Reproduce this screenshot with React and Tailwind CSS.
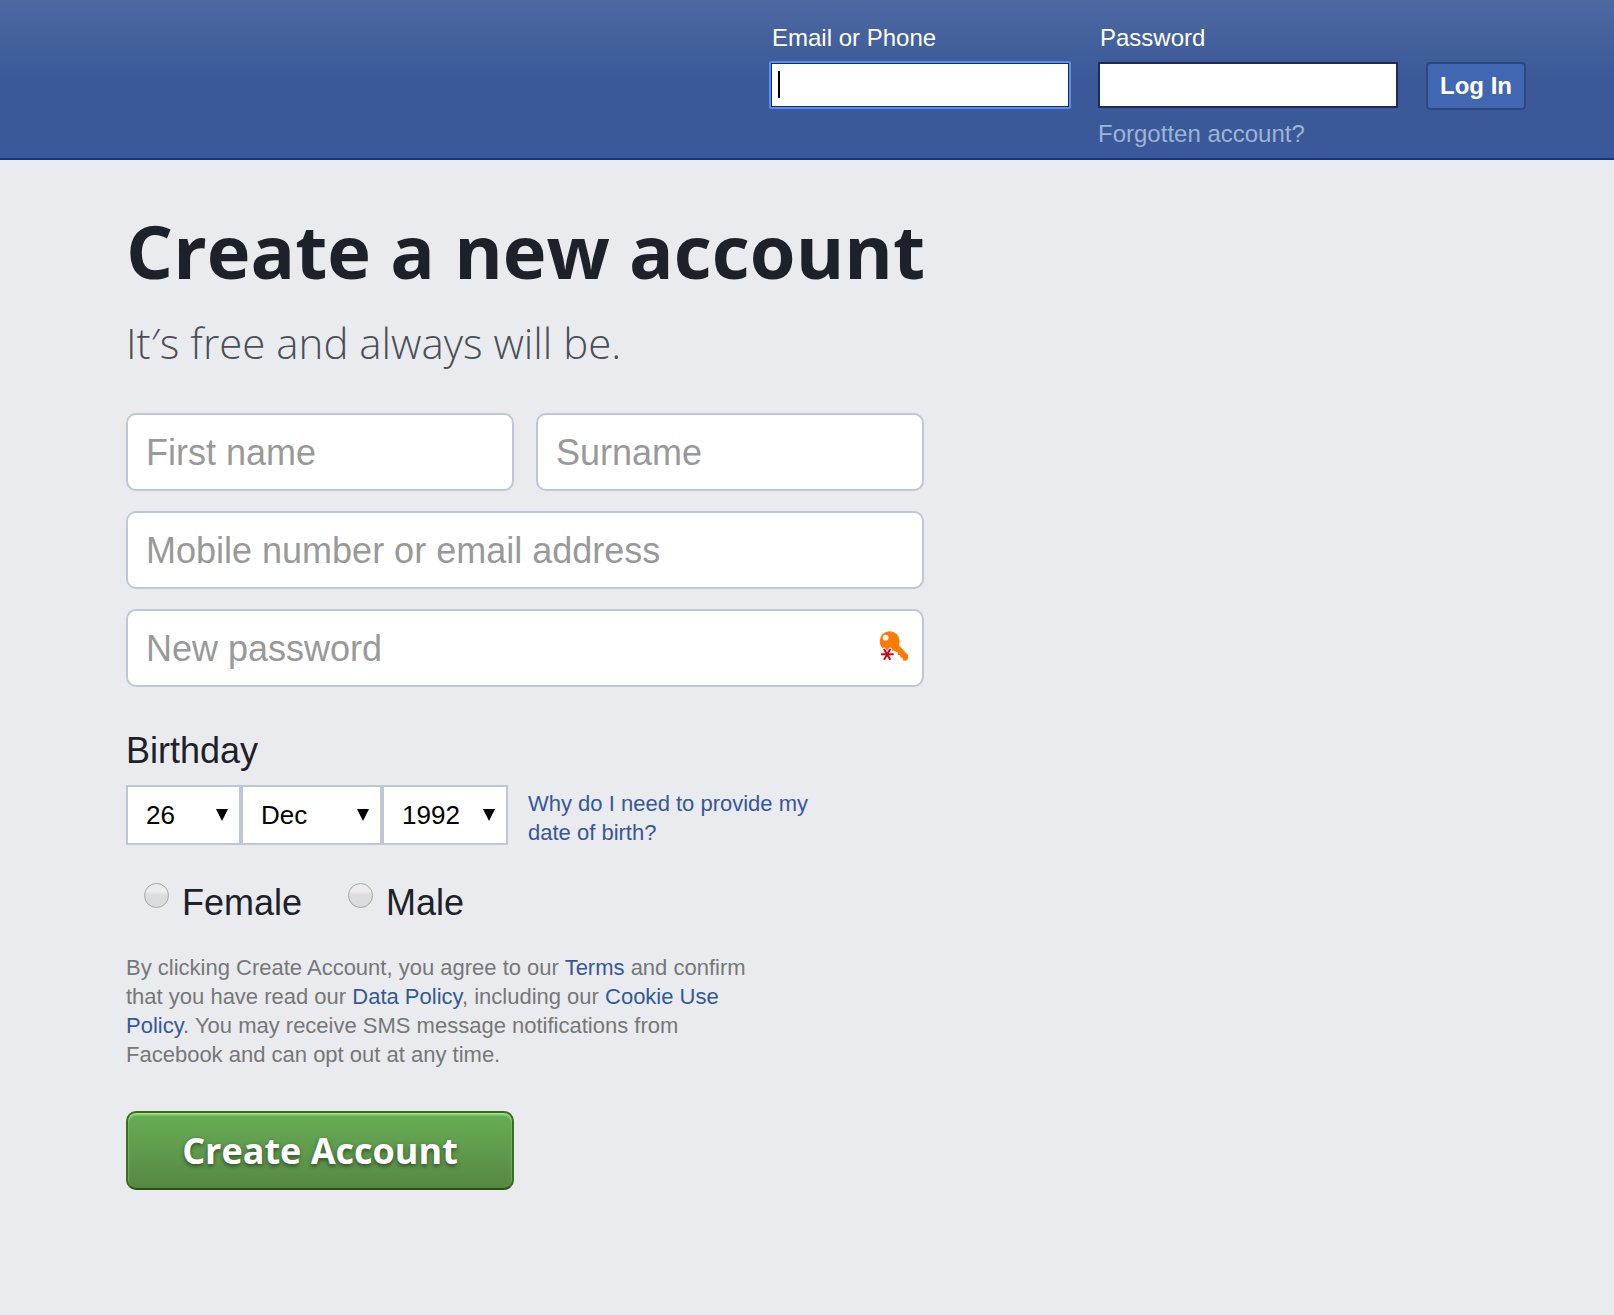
const days = Array.from({ length: 31 }, (_, i) => String(i + 1));
const months = ['Jan', 'Feb', 'Mar', 'Apr', 'May', 'Jun', 'Jul', 'Aug', 'Sep', 'Oct', 'Nov', 'Dec'];
const years = Array.from({ length: 100 }, (_, i) => String(2018 - i));

function KeyIcon({ className }) {
  return (
    <svg viewBox="0 0 90 90" className={className} aria-hidden="true">
      <circle cx="32" cy="31" r="30" fill="#ff7a00" />
      <path fill="#ff7a00" d="M58 40l6 8 23 24v12l-5 5H73l-2-8-7-2v-6l-8-2v-7l-10-3-4-10Z" />
      <circle cx="20" cy="20" r="8.5" fill="#fff" />
      <path d="M7 70h36M15 56l19 28M34 56 15 84" stroke="#fff" strokeWidth="12" strokeLinecap="round" />
      <path d="M6 70h38M15 54l19 32M34 54 15 86" stroke="#d0021b" strokeWidth="6" />
    </svg>
  );
}

function SignupInput({ label, type = 'text', className = '' }) {
  return (
    <input
      type={type}
      aria-label={label}
      placeholder={label}
      className={`h-[78px] w-full min-w-0 rounded-[10px] border-2 border-[#bdc7d8] bg-white px-[18px] pt-0.5 text-[36px] text-[#1d2129] placeholder:text-[#999] ${className}`}
    />
  );
}

function DateSelect({ label, options, value, className }) {
  return (
    <div className={`relative ${className}`}>
      <select
        aria-label={label}
        defaultValue={value}
        className="h-[60px] w-full appearance-none border-2 border-[#bdc7d8] bg-white pl-[18px] text-[26px] text-black"
      >
        {options.map((o) => (
          <option key={o}>{o}</option>
        ))}
      </select>
      <svg viewBox="0 0 12 12" className="pointer-events-none absolute top-6 right-[13px] size-3" aria-hidden="true">
        <path d="M0 0h12L6 12Z" fill="#000" />
      </svg>
    </div>
  );
}

function GenderRadio({ label }) {
  return (
    <label className="flex items-start gap-[13px]">
      <input
        type="radio"
        name="gender"
        className="size-[25px] appearance-none rounded-full border border-[#a6a6a6] bg-linear-to-b from-[#ededed] from-30% to-[#dcdcdc] to-50% checked:border-8 checked:border-[#555]"
      />
      <span className="text-[36px] leading-10">{label}</span>
    </label>
  );
}

function TextLink({ children }) {
  return (
    <a href="#" className="text-[#365899] hover:underline">
      {children}
    </a>
  );
}

export default function App() {
  return (
    <div className="min-h-screen bg-[#e9ebee] font-['Liberation_Sans',Arial,sans-serif] text-[#1d2129]">
      <header className="border-b-2 border-[#133783] bg-linear-to-b from-[#4e69a2] to-[#3b5998] to-50% pt-6 pr-[88px] pb-2.5">
        <form className="flex items-start justify-end gap-7 text-2xl leading-7 text-white">
          <div className="flex w-[300px] flex-col">
            <label htmlFor="login-email" className="mb-2.5 pl-0.5">
              Email or Phone
            </label>
            <div className="relative">
              <input
                id="login-email"
                type="text"
                className="block h-[46px] w-full rounded-[1px] border-2 border-[#1d2a5b] bg-white px-1.5 text-black caret-transparent outline-2 -outline-offset-1 outline-[#4d90fe]"
              />
              <span className="absolute top-[9px] left-2 h-[27px] w-0.5 bg-black" aria-hidden="true" />
            </div>
          </div>
          <div className="flex w-[300px] flex-col">
            <label htmlFor="login-password" className="mb-2.5 pl-0.5">
              Password
            </label>
            <input
              id="login-password"
              type="password"
              className="block h-[46px] w-full border-2 border-[#1d2a5b] bg-white px-1.5 text-black"
            />
            <a href="#" className="mt-3 text-[#9cb4d8] hover:underline">
              Forgotten account?
            </a>
          </div>
          <button
            type="submit"
            className="mt-[38px] h-12 rounded-[4px] border-2 border-[#29487d] bg-[#4267b2] px-3 leading-none font-bold"
          >
            Log In
          </button>
        </form>
      </header>

      <main className="px-[126px] pt-[51px] pb-20">
        <form className="max-w-[798px]">
          <h1 className="font-['Open_Sans',sans-serif] text-[74px] leading-[80px] font-bold whitespace-nowrap">
            Create a new account
          </h1>
          <p className="mt-7 font-['Open_Sans',sans-serif] text-[42px] leading-[48px] font-light text-[#4b4f56]">
            It′s free and always will be.
          </p>

          <div className="mt-[46px] grid grid-cols-2 gap-x-[22px] gap-y-5">
            <SignupInput label="First name" />
            <SignupInput label="Surname" />
            <SignupInput label="Mobile number or email address" className="col-span-2" />
            <div className="relative col-span-2">
              <SignupInput label="New password" type="password" className="block" />
              <KeyIcon className="absolute top-[22px] right-[15px] size-[30px]" />
            </div>
          </div>

          <fieldset className="mt-11">
            <legend className="text-[36px] leading-10">Birthday</legend>
            <div className="mt-3.5 flex items-start">
              <DateSelect label="Day" options={days} value="26" className="w-[115px]" />
              <DateSelect label="Month" options={months} value="Dec" className="w-[141px]" />
              <DateSelect label="Year" options={years} value="1992" className="w-[126px]" />
              <a href="#" className="mt-1 ml-5 max-w-[300px] text-[22px] leading-[29px] text-[#365899] hover:underline">
                Why do I need to provide my date of birth?
              </a>
            </div>
          </fieldset>

          <div className="mt-9 flex gap-[46px] pl-[18px]">
            <GenderRadio label="Female" />
            <GenderRadio label="Male" />
          </div>

          <p className="mt-[30px] max-w-[632px] text-[22px] leading-[29px] text-[#777]">
            By clicking Create Account, you agree to our <TextLink>Terms</TextLink> and confirm that you have read our{' '}
            <TextLink>Data Policy</TextLink>, including our <TextLink>Cookie Use Policy</TextLink>. You may receive SMS
            message notifications from Facebook and can opt out at any time.
          </p>

          <button
            type="submit"
            className="mt-[42px] h-[79px] w-[388px] rounded-[10px] border-2 border-[#3b6e22] border-b-[#2c5115] bg-linear-to-b from-[#67ae55] to-[#578843] font-['Open_Sans',sans-serif] text-[36px] leading-none font-bold text-white shadow-[inset_0_2px_2px_#a4e388] [text-shadow:0_2px_4px_rgb(0_0_0/0.5)]"
          >
            Create Account
          </button>
        </form>
      </main>
    </div>
  );
}
